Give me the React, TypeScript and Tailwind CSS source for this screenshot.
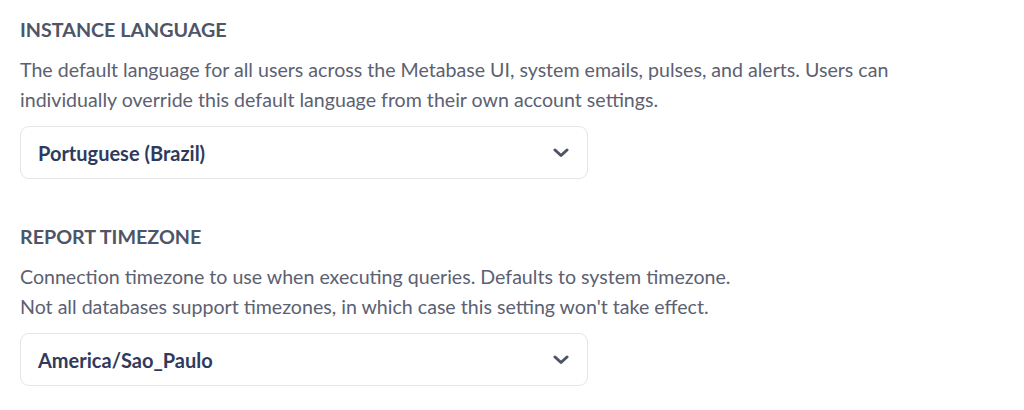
function Chevron() {
  return (
    <svg width="16" height="10" viewBox="0 0 16 10" fill="none" className="text-[#4c5466]">
      <path d="M2 2l6 5.5L14 2" stroke="currentColor" strokeWidth="3" strokeLinecap="round" strokeLinejoin="round" />
    </svg>
  )
}

function SettingSelect({ value }: { value: string }) {
  return (
    <button
      type="button"
      className="flex h-[53px] w-[568px] items-center justify-between rounded-[9px] border border-[#e4e6ea] bg-white pl-[17px] pr-[18px] text-left"
    >
      <span className="text-[20px] font-bold leading-[24px] text-[#2f3b5d]">{value}</span>
      <Chevron />
    </button>
  )
}

function SettingSection({ title, lines, value }: { title: string; lines: string[]; value: string }) {
  return (
    <section>
      <h2 className="text-[19.7px] font-bold uppercase leading-[24px] text-[#4e5567]">{title}</h2>
      <p className="mt-[13px] text-[19.6px] leading-[30px] text-[#5c6172]">
        {lines.map((line, i) => (
          <span key={i} className="block">
            {line}
          </span>
        ))}
      </p>
      <div className="mt-[11px]">
        <SettingSelect value={value} />
      </div>
    </section>
  )
}

export default function App() {
  return (
    <div className="min-h-[410px] bg-white px-[20px] pt-[18px] font-['Lato','Noto_Sans',sans-serif]">
      <div className="space-y-[46px]">
        <SettingSection
          title="Instance Language"
          lines={[
            'The default language for all users across the Metabase UI, system emails, pulses, and alerts. Users can',
            'individually override this default language from their own account settings.',
          ]}
          value="Portuguese (Brazil)"
        />
        <SettingSection
          title="Report Timezone"
          lines={[
            'Connection timezone to use when executing queries. Defaults to system timezone.',
            "Not all databases support timezones, in which case this setting won't take effect.",
          ]}
          value="America/Sao_Paulo"
        />
      </div>
    </div>
  )
}
